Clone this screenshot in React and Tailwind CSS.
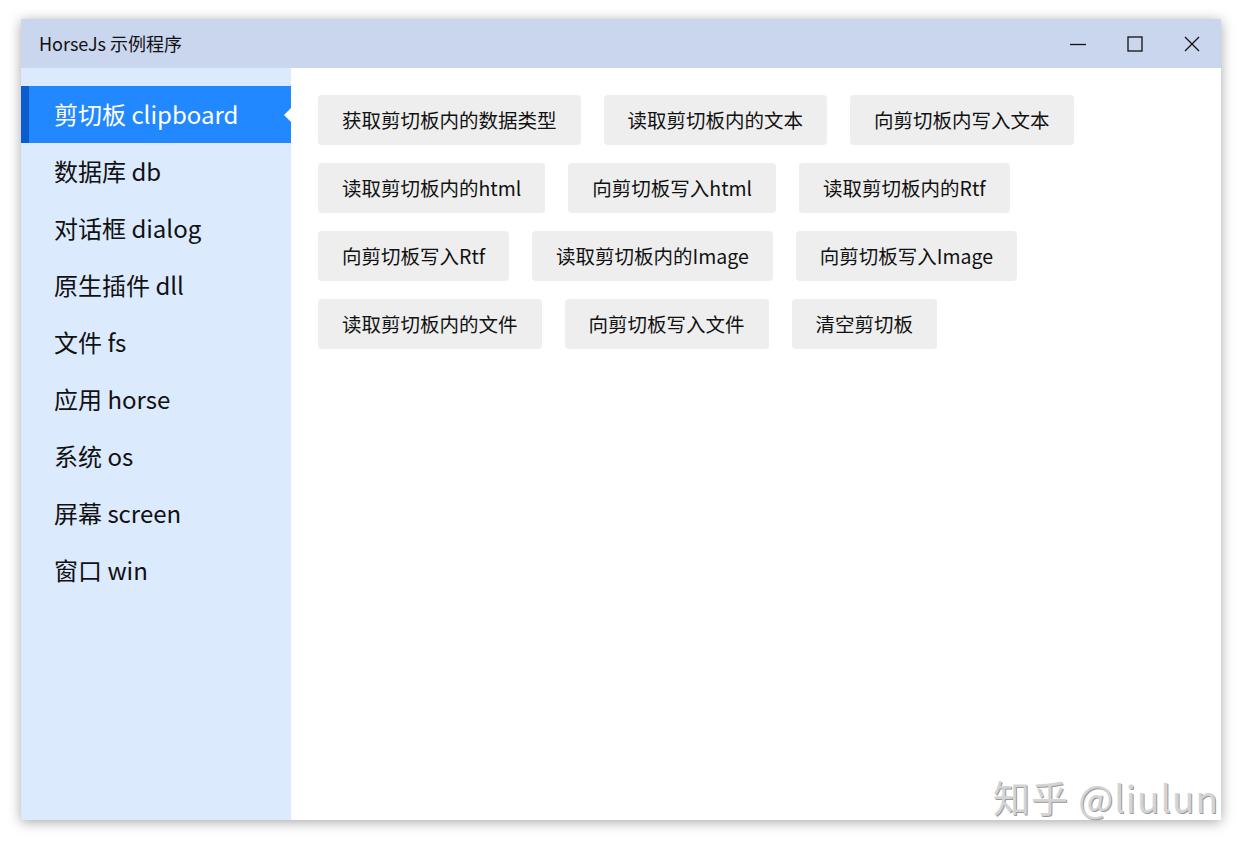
import React, { useState } from "react";

const menus = [
  "剪切板 clipboard",
  "数据库 db",
  "对话框 dialog",
  "原生插件 dll",
  "文件 fs",
  "应用 horse",
  "系统 os",
  "屏幕 screen",
  "窗口 win",
];

const actions = [
  "获取剪切板内的数据类型",
  "读取剪切板内的文本",
  "向剪切板内写入文本",
  "读取剪切板内的html",
  "向剪切板写入html",
  "读取剪切板内的Rtf",
  "向剪切板写入Rtf",
  "读取剪切板内的Image",
  "向剪切板写入Image",
  "读取剪切板内的文件",
  "向剪切板写入文件",
  "清空剪切板",
];

const font = { fontFamily: '"Noto Sans CJK SC", "Noto Sans", sans-serif' };

const App = () => {
  const [active, setActive] = useState(0);

  return (
    <div
      className="w-[1246px] h-[844px] bg-white pl-[21px] pt-[19px] relative overflow-hidden"
      style={font}
    >
      <div className="w-[1200px] h-[801px] flex flex-col bg-white shadow-[0_2px_12px_rgba(0,0,0,0.35)]">
        {/* title bar */}
        <div className="h-[49px] shrink-0 bg-[#cad5ee] flex items-center pl-[18px] text-[18px] text-[#111]">
          <span className="flex-1">HorseJs 示例程序</span>
          <div className="flex items-center h-full">
            <button className="w-[57px] h-full flex items-center justify-center">
              <svg width="18" height="18" viewBox="0 0 18 18">
                <path d="M1 9.5h16" stroke="#111" strokeWidth="1.3" />
              </svg>
            </button>
            <button className="w-[57px] h-full flex items-center justify-center">
              <svg width="18" height="18" viewBox="0 0 18 18">
                <rect x="2" y="2" width="14" height="14" fill="none" stroke="#111" strokeWidth="1.3" />
              </svg>
            </button>
            <button className="w-[57px] h-full flex items-center justify-center mr-[1px]">
              <svg width="18" height="18" viewBox="0 0 18 18">
                <path d="M2 2l14 14M16 2L2 16" stroke="#111" strokeWidth="1.3" />
              </svg>
            </button>
          </div>
        </div>

        <div className="flex flex-1 min-h-0">
          {/* sidebar */}
          <div className="w-[270px] shrink-0 bg-[#dbeafd] pt-[18px]">
            {menus.map((m, i) => (
              <div
                key={m}
                onClick={() => setActive(i)}
                className={
                  i === active
                    ? "relative h-[57px] flex items-center pl-[25px] pb-[2px] text-[24px] text-white bg-[#2288ff] border-l-[8px] border-[#0b5ccc] cursor-pointer"
                    : "h-[57px] flex items-center pl-[33px] pb-[2px] text-[24px] text-[#111] cursor-pointer"
                }
              >
                {m}
                {i === active && (
                  <span className="absolute right-0 top-1/2 -translate-y-1/2 w-0 h-0 border-y-[7px] border-y-transparent border-r-[7px] border-r-white" />
                )}
              </div>
            ))}
          </div>

          {/* content */}
          <div className="flex-1 pl-[27px] pt-[27px] pr-[120px]">
            <div className="flex flex-wrap gap-x-[23px] gap-y-[18px]">
              {actions.map((a) => (
                <button
                  key={a}
                  className="h-[50px] px-6 rounded-[4px] bg-[#eeeeee] text-[19.5px] text-[#111] hover:bg-[#e2e2e2]"
                >
                  {a}
                </button>
              ))}
            </div>
          </div>
        </div>
      </div>

      {/* watermark */}
      <div
        className="absolute left-[993px] top-[770px] text-[37px] text-[#d4d4d4] tracking-[1px] [text-shadow:1px_1px_0_#9a9a9a]"
        style={font}
      >
        知乎 @liulun
      </div>
    </div>
  );
};

export default App;
